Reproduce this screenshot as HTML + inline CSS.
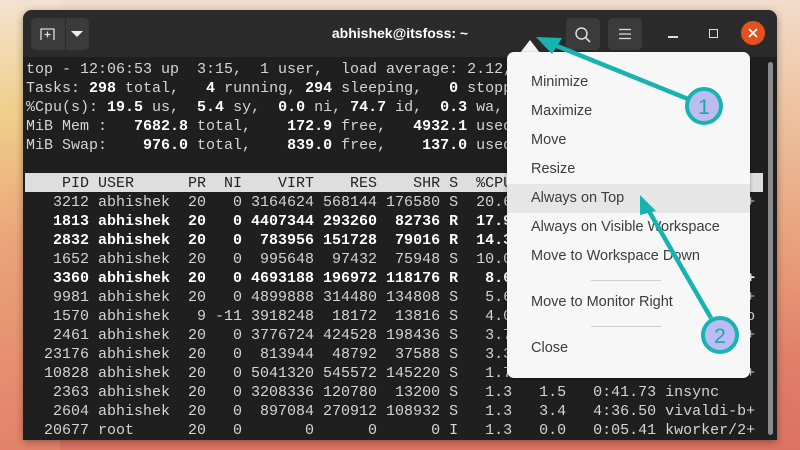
<!DOCTYPE html>
<html><head><meta charset="utf-8"><style>
*{margin:0;padding:0;box-sizing:border-box}
body{width:800px;height:450px;overflow:hidden;position:relative;
background:linear-gradient(180deg,#f2dccb 0%,#eec2a0 25%,#e9a07a 55%,#e07f68 80%,#dd7262 100%);font-family:"Liberation Sans",sans-serif}
.bgl{position:absolute;left:0;top:0;width:60px;height:450px;background:linear-gradient(180deg,#f3e2d0 0%,#f0cf8a 25%,#eaa27a 55%,#e2826a 100%)}
.win{position:absolute;left:23px;top:10px;width:754px;height:430px;background:#1f1f1f;border-radius:9px 9px 0 0;overflow:hidden;box-shadow:0 2px 8px rgba(0,0,0,.35)}
.tb{position:absolute;left:0;top:0;width:754px;height:47px;background:#2b2b2b}
.btn{position:absolute;background:#3b3b3b;border-radius:5px}
.title{position:absolute;left:0;width:754px;top:15px;text-align:center;color:#fff;font-weight:bold;font-size:14px}
.term{position:absolute;left:3px;top:50px;font-family:"Liberation Mono",monospace;font-size:15px;line-height:19px;color:#d4d4d4;white-space:pre}
.term b{color:#fff}
.hdr{position:absolute;left:2px;top:163px;width:738px;height:19px;background:#dedede}
.sb{position:absolute;left:745px;top:52px;width:5px;height:373px;background:#8a8a8a;border-radius:3px}
.menu{position:absolute;left:507px;top:52px;width:243px;height:326px;background:#f7f7f7;border-radius:7px;box-shadow:0 1px 4px rgba(0,0,0,.3)}
.mi{position:absolute;left:24px;font-size:14.5px;color:#3c3c3c}
.sep{position:absolute;left:84px;width:70px;height:1px;background:#cfcfcf}
</style></head><body>
<div class="bgl"></div>
<div class="win">
 <div class="tb"></div>
 <div class="btn" style="left:8px;top:8px;width:58px;height:32px"></div>
 <div style="position:absolute;left:42px;top:8px;width:1px;height:32px;background:#2b2b2b"></div>
 <svg style="position:absolute;left:16px;top:16px" width="18" height="16"><path d="M2 14V3H15V14" fill="none" stroke="#ddd" stroke-width="1.3"/><path d="M8.5 5.5V11.5M5.5 8.5H11.5" stroke="#ddd" stroke-width="1.3"/></svg>
 <svg style="position:absolute;left:47px;top:20px" width="14" height="8"><path d="M1 1H13L7 7Z" fill="#eee"/></svg>
 <div class="title">abhishek@itsfoss: ~</div>
 <div class="btn" style="left:543px;top:8px;width:34px;height:32px"></div>
 <svg style="position:absolute;left:551px;top:16px" width="18" height="18"><circle cx="7.5" cy="7.5" r="5.5" fill="none" stroke="#ddd" stroke-width="1.5"/><path d="M11.5 11.5L16 16" stroke="#ddd" stroke-width="1.6"/></svg>
 <div class="btn" style="left:585px;top:8px;width:34px;height:32px"></div>
 <svg style="position:absolute;left:595px;top:18px" width="14" height="12"><path d="M1 1.5H13M1 6H13M1 10.5H13" stroke="#ddd" stroke-width="1.3"/></svg>
 <div style="position:absolute;left:645px;top:26px;width:10px;height:1.5px;background:#ddd"></div>
 <div style="position:absolute;left:686px;top:19px;width:9px;height:9px;border:1.5px solid #ddd"></div>
 <div style="position:absolute;left:718px;top:11px;width:24px;height:24px;border-radius:50%;background:#e4511f"></div>
 <svg style="position:absolute;left:724px;top:17px" width="12" height="12"><path d="M2 2L10 10M10 2L2 10" stroke="#fff" stroke-width="1.7"/></svg>
 <div class="hdr"></div>
 <div class="sb"></div>
<div class="term">top - 12:06:53 up  3:15,  1 user,  load average: 2.12, 1.98, 1.87
Tasks: <b>298</b> total,   <b>4</b> running, <b>294</b> sleeping,   <b>0</b> stopped,   <b>0</b> zombie
%Cpu(s): <b>19.5</b> us,  <b>5.4</b> sy,  <b>0.0</b> ni, <b>74.7</b> id,  <b>0.3</b> wa,  <b>0.0</b> hi
MiB Mem :   <b>7682.8</b> total,    <b>172.9</b> free,   <b>4932.1</b> used,   2577.8 buff
MiB Swap:    <b>976.0</b> total,    <b>839.0</b> free,    <b>137.0</b> used.   2078.2 avail

<span style="color:#222">    PID USER      PR  NI    VIRT    RES    SHR S  %CPU  %MEM     TIME+ COMMAND</span>
   3212 abhishek  20   0 3164624 568144 176580 S  20.6   7.2  12:03.11 vivaldi-b+
<b>   1813 abhishek  20   0 4407344 293260  82736 R  17.9   3.7  18:44.20 gnome-sh+</b>
<b>   2832 abhishek  20   0  783956 151728  79016 R  14.3   1.9   6:12.55 gnome-te+</b>
   1652 abhishek  20   0  995648  97432  75948 S  10.0   1.2   9:41.02 Xorg
<b>   3360 abhishek  20   0 4693188 196972 118176 R   8.6   2.5   3:20.17 vivaldi-b+</b>
   9981 abhishek  20   0 4899888 314480 134808 S   5.6   4.0   2:05.33 vivaldi-b+
   1570 abhishek   9 -11 3918248  18172  13816 S   4.0   0.2   4:11.90 pulseaudio
   2461 abhishek  20   0 3776724 424528 198436 S   3.7   5.4   7:51.06 vivaldi-b+
  23176 abhishek  20   0  813944  48792  37588 S   3.3   0.6   0:02.44 gnome-sc+
  10828 abhishek  20   0 5041320 545572 145220 S   1.7   6.9   5:33.81 vivaldi-b+
   2363 abhishek  20   0 3208336 120780  13200 S   1.3   1.5   0:41.73 insync
   2604 abhishek  20   0  897084 270912 108932 S   1.3   3.4   4:36.50 vivaldi-b+
  20677 root      20   0       0      0      0 I   1.3   0.0   0:05.41 kworker/2+</div>
</div>
<svg style="position:absolute;left:520px;top:38px" width="22" height="16"><path d="M0 15L10 2L20 15Z" fill="#f7f7f7"/></svg>
<div class="menu">
 <div style="position:absolute;left:0;top:132px;width:243px;height:29px;background:#e6e6e6"></div>
 <div class="mi" style="top:22px">Minimize</div>
 <div class="mi" style="top:51px">Maximize</div>
 <div class="mi" style="top:80px">Move</div>
 <div class="mi" style="top:109px">Resize</div>
 <div class="mi" style="top:138px">Always on Top</div>
 <div class="mi" style="top:167px">Always on Visible Workspace</div>
 <div class="mi" style="top:196px">Move to Workspace Down</div>
 <div class="sep" style="top:228px"></div>
 <div class="mi" style="top:242px">Move to Monitor Right</div>
 <div class="sep" style="top:274px"></div>
 <div class="mi" style="top:288px">Close</div>
</div>
<svg style="position:absolute;left:0;top:0" width="800" height="450">
 <path d="M688 99L547 42" stroke="#17b3b1" stroke-width="4.5" fill="none"/>
 <path d="M536 37L562 38L552 54Z" fill="#17b3b1"/>
 <circle cx="704" cy="106" r="17" fill="#bcbcf2" stroke="#17b3b1" stroke-width="4"/>
 <text x="704" y="114" text-anchor="middle" font-family="Liberation Sans,sans-serif" font-size="21" fill="#17a9a7">1</text>
 <path d="M711 318L646 206" stroke="#17b3b1" stroke-width="4.5" fill="none"/>
 <path d="M640 195L656 211L640 215Z" fill="#17b3b1"/>
 <circle cx="720" cy="335" r="17" fill="#bcbcf2" stroke="#17b3b1" stroke-width="4"/>
 <text x="720" y="343" text-anchor="middle" font-family="Liberation Sans,sans-serif" font-size="21" fill="#17a9a7">2</text>
</svg>
</body></html>
